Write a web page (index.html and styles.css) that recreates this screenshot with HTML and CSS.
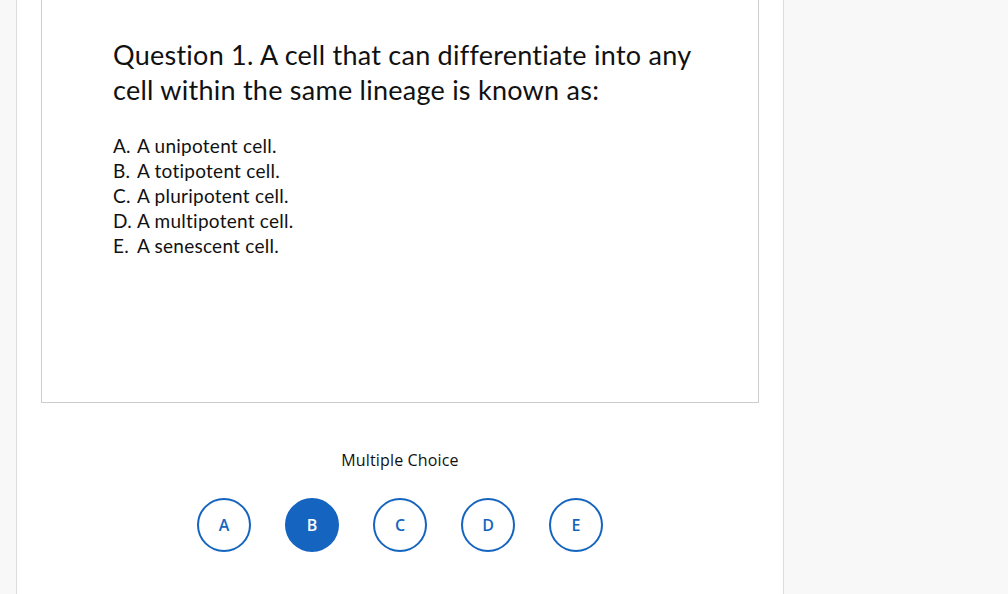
FILE: index.html
```html
<!DOCTYPE html>
<html lang="en">
<head>
    <meta charset="UTF-8">
    <meta name="viewport" content="width=device-width, initial-scale=1.0">
    <title>Question 1</title>
    <link rel="stylesheet" href="styles.css">
</head>
<body>
    <div class="page">
        <div class="question-box">
            <h1 class="question">Question 1. A cell that can differentiate into any cell within the same lineage is known as:</h1>
            <ol class="options">
                <li><span class="opt-letter">A.</span>A unipotent cell.</li>
                <li><span class="opt-letter">B.</span>A totipotent cell.</li>
                <li><span class="opt-letter">C.</span>A pluripotent cell.</li>
                <li><span class="opt-letter">D.</span>A multipotent cell.</li>
                <li><span class="opt-letter">E.</span>A senescent cell.</li>
            </ol>
        </div>

        <div class="answer-area">
            <div class="answer-label">Multiple Choice</div>
            <div class="choices">
                <button class="choice">A</button>
                <button class="choice selected">B</button>
                <button class="choice">C</button>
                <button class="choice">D</button>
                <button class="choice">E</button>
            </div>
        </div>
    </div>
</body>
</html>
```

FILE: styles.css
```css
html, body {
    height: 100%;
}
body {
    margin: 0;
    background-color: #f8f8f8;
    font-family: "Open Sans", Arial, sans-serif;
    overflow: hidden;
}
.page {
    box-sizing: border-box;
    margin-left: 16px;
    width: 768px;
    min-height: 100%;
    background-color: #fff;
    border-left: 1px solid #ddd;
    border-right: 1px solid #ddd;
    padding: 0 24px;
}
.question-box {
    border: 1px solid #ccc;
    border-top: none;
    height: 403px;
    box-sizing: border-box;
    padding: 37px 0 0 71px;
    font-family: Lato, Calibri, sans-serif;
    color: #111;
}
.question {
    margin: 0;
    max-width: 610px;
    font-size: 27px;
    font-weight: normal;
    line-height: 35px;
    letter-spacing: 0.25px;
}
.options {
    list-style: none;
    margin: 26px 0 0;
    padding: 0;
    font-size: 19px;
    line-height: 25px;
    letter-spacing: 0.25px;
}
.opt-letter {
    display: inline-block;
    width: 24px;
}
.answer-area {
    padding-top: 46px;
    text-align: center;
}
.answer-label {
    font-size: 16px;
    letter-spacing: 0.15px;
    color: #111;
}
.choices {
    display: flex;
    justify-content: center;
    gap: 34px;
    margin-top: 27px;
}
.choice {
    width: 54px;
    height: 54px;
    border-radius: 50%;
    border: 2px solid #1565c0;
    background-color: #fff;
    color: #1565c0;
    font-family: "Open Sans", Arial, sans-serif;
    font-size: 16px;
    font-weight: 600;
    padding: 0;
    cursor: pointer;
}
.choice.selected {
    background-color: #1565c0;
    color: #fff;
}
```
